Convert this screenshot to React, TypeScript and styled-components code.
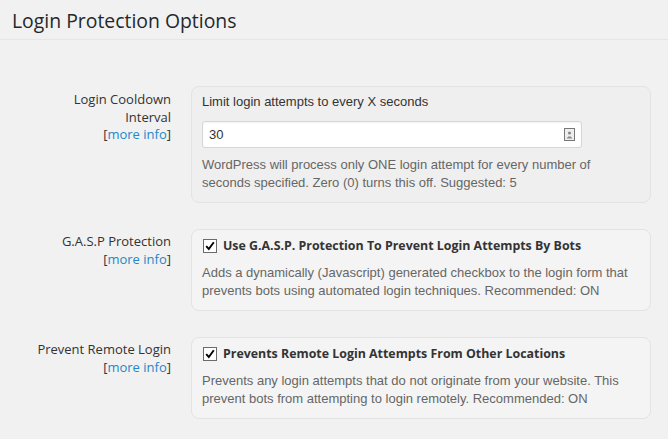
import styled, { createGlobalStyle } from 'styled-components';

const GlobalStyle = createGlobalStyle`
    html, body {
        margin: 0;
        padding: 0;
        background: #f1f1f1;
    }
    body {
        font-family: "Open Sans", "Liberation Sans", sans-serif;
        color: #333;
    }
`

const Page = styled.div`
    width: 668px;
    height: 439px;
    overflow: hidden;
`
const Header = styled.h2`
    margin: 0;
    padding: 5px 12px 0;
    height: 34px;
    font-size: 19.4px;
    line-height: 31px;
    font-weight: 400;
    color: #23282d;
    border-bottom: 1px solid #e6e6e6;
`
const Options = styled.div`
    display: flex;
    flex-direction: column;
    gap: 26px;
    padding: 46px 17px 0 31px;
`
const Row = styled.div`
    display: flex;
    gap: 20px;
    align-items: flex-start;
`
const Label = styled.div<{ $top: number }>`
    width: 140px;
    flex: none;
    padding-top: ${p => p.$top}px;
    text-align: right;
    font-size: 13px;
    line-height: 17.5px;
    color: #333;
`
const MoreInfo = styled.a`
    color: #2188c9;
    text-decoration: none;
`
const Card = styled.div<{ $bg: string }>`
    flex: 1;
    padding: 6px 10px 10px;
    background: ${p => p.$bg};
    border: 1px solid #e3e3e3;
    border-radius: 8px;
    font-family: "Liberation Sans", Arial, sans-serif;
    font-size: 13px;
    line-height: 18px;
    color: #333;
`
const FieldTitle = styled.div`
    height: 18px;
    margin-bottom: 10px;
`
const InputWrap = styled.div`
    position: relative;
    width: 380px;
    height: 27px;
    margin-bottom: 8px;
`
const Input = styled.input`
    box-sizing: border-box;
    width: 100%;
    height: 100%;
    padding: 0 24px 0 6px;
    border: 1px solid #d6d6d6;
    border-radius: 3px;
    background: #fff;
    font-family: "Liberation Sans", Arial, sans-serif;
    font-size: 13px;
    color: #333;
    box-shadow: inset 0 1px 2px rgba(0, 0, 0, 0.05);
    outline: none;
`
const InputIcon = styled.svg`
    position: absolute;
    right: 7px;
    top: 7px;
`
const CheckRow = styled.label`
    display: flex;
    align-items: center;
    gap: 6px;
    height: 20px;
    margin-bottom: 8px;
    font-family: "Open Sans", "Liberation Sans", sans-serif;
    font-weight: 700;
    font-size: 12.4px;
    color: #333;
`
const Box = styled.span`
    display: flex;
    align-items: center;
    justify-content: center;
    box-sizing: border-box;
    width: 14px;
    height: 14px;
    margin-left: 1px;
    border: 1px solid #6b6b6b;
    background: #fff;
`
const Description = styled.p`
    margin: 0;
    color: #666;
`

function MoreLink() {
    return <>[<MoreInfo href="#">more info</MoreInfo>]</>
}

function Checkbox() {
    return (
        <Box>
            <svg width="10" height="10" viewBox="0 0 10 10">
                <path d="M1.2 5.2 L3.8 8 L8.8 1.2" fill="none" stroke="#000" strokeWidth="1.9" />
            </svg>
        </Box>
    )
}

export default function App() {
    return (
        <Page>
            <GlobalStyle />
            <Header>Login Protection Options</Header>
            <Options>
                <Row>
                    <Label $top={5}>Login Cooldown Interval<br /><MoreLink /></Label>
                    <Card $bg="#efefef">
                        <FieldTitle>Limit login attempts to every X seconds</FieldTitle>
                        <InputWrap>
                            <Input defaultValue="30" />
                            <InputIcon width="11" height="13" viewBox="0 0 11 13">
                                <rect x="0.5" y="0.5" width="10" height="12" fill="#eee" stroke="#777" />
                                <circle cx="5.5" cy="5" r="1.6" fill="#888" />
                                <path d="M2.5 10.5 Q5.5 5.8 8.5 10.5 Z" fill="#888" />
                            </InputIcon>
                        </InputWrap>
                        <Description>
                            WordPress will process only ONE login attempt for every number of seconds specified. Zero (0) turns this off. Suggested: 5
                        </Description>
                    </Card>
                </Row>
                <Row>
                    <Label $top={4}>G.A.S.P Protection<br /><MoreLink /></Label>
                    <Card $bg="#f4f4f4">
                        <CheckRow>
                            <Checkbox />
                            Use G.A.S.P. Protection To Prevent Login Attempts By Bots
                        </CheckRow>
                        <Description>
                            Adds a dynamically (Javascript) generated checkbox to the login form that prevents bots using automated login techniques. Recommended: ON
                        </Description>
                    </Card>
                </Row>
                <Row>
                    <Label $top={4}>Prevent Remote Login<br /><MoreLink /></Label>
                    <Card $bg="#f4f4f4">
                        <CheckRow>
                            <Checkbox />
                            Prevents Remote Login Attempts From Other Locations
                        </CheckRow>
                        <Description>
                            Prevents any login attempts that do not originate from your website. This prevent bots from attempting to login remotely. Recommended: ON
                        </Description>
                    </Card>
                </Row>
            </Options>
        </Page>
    );
}
